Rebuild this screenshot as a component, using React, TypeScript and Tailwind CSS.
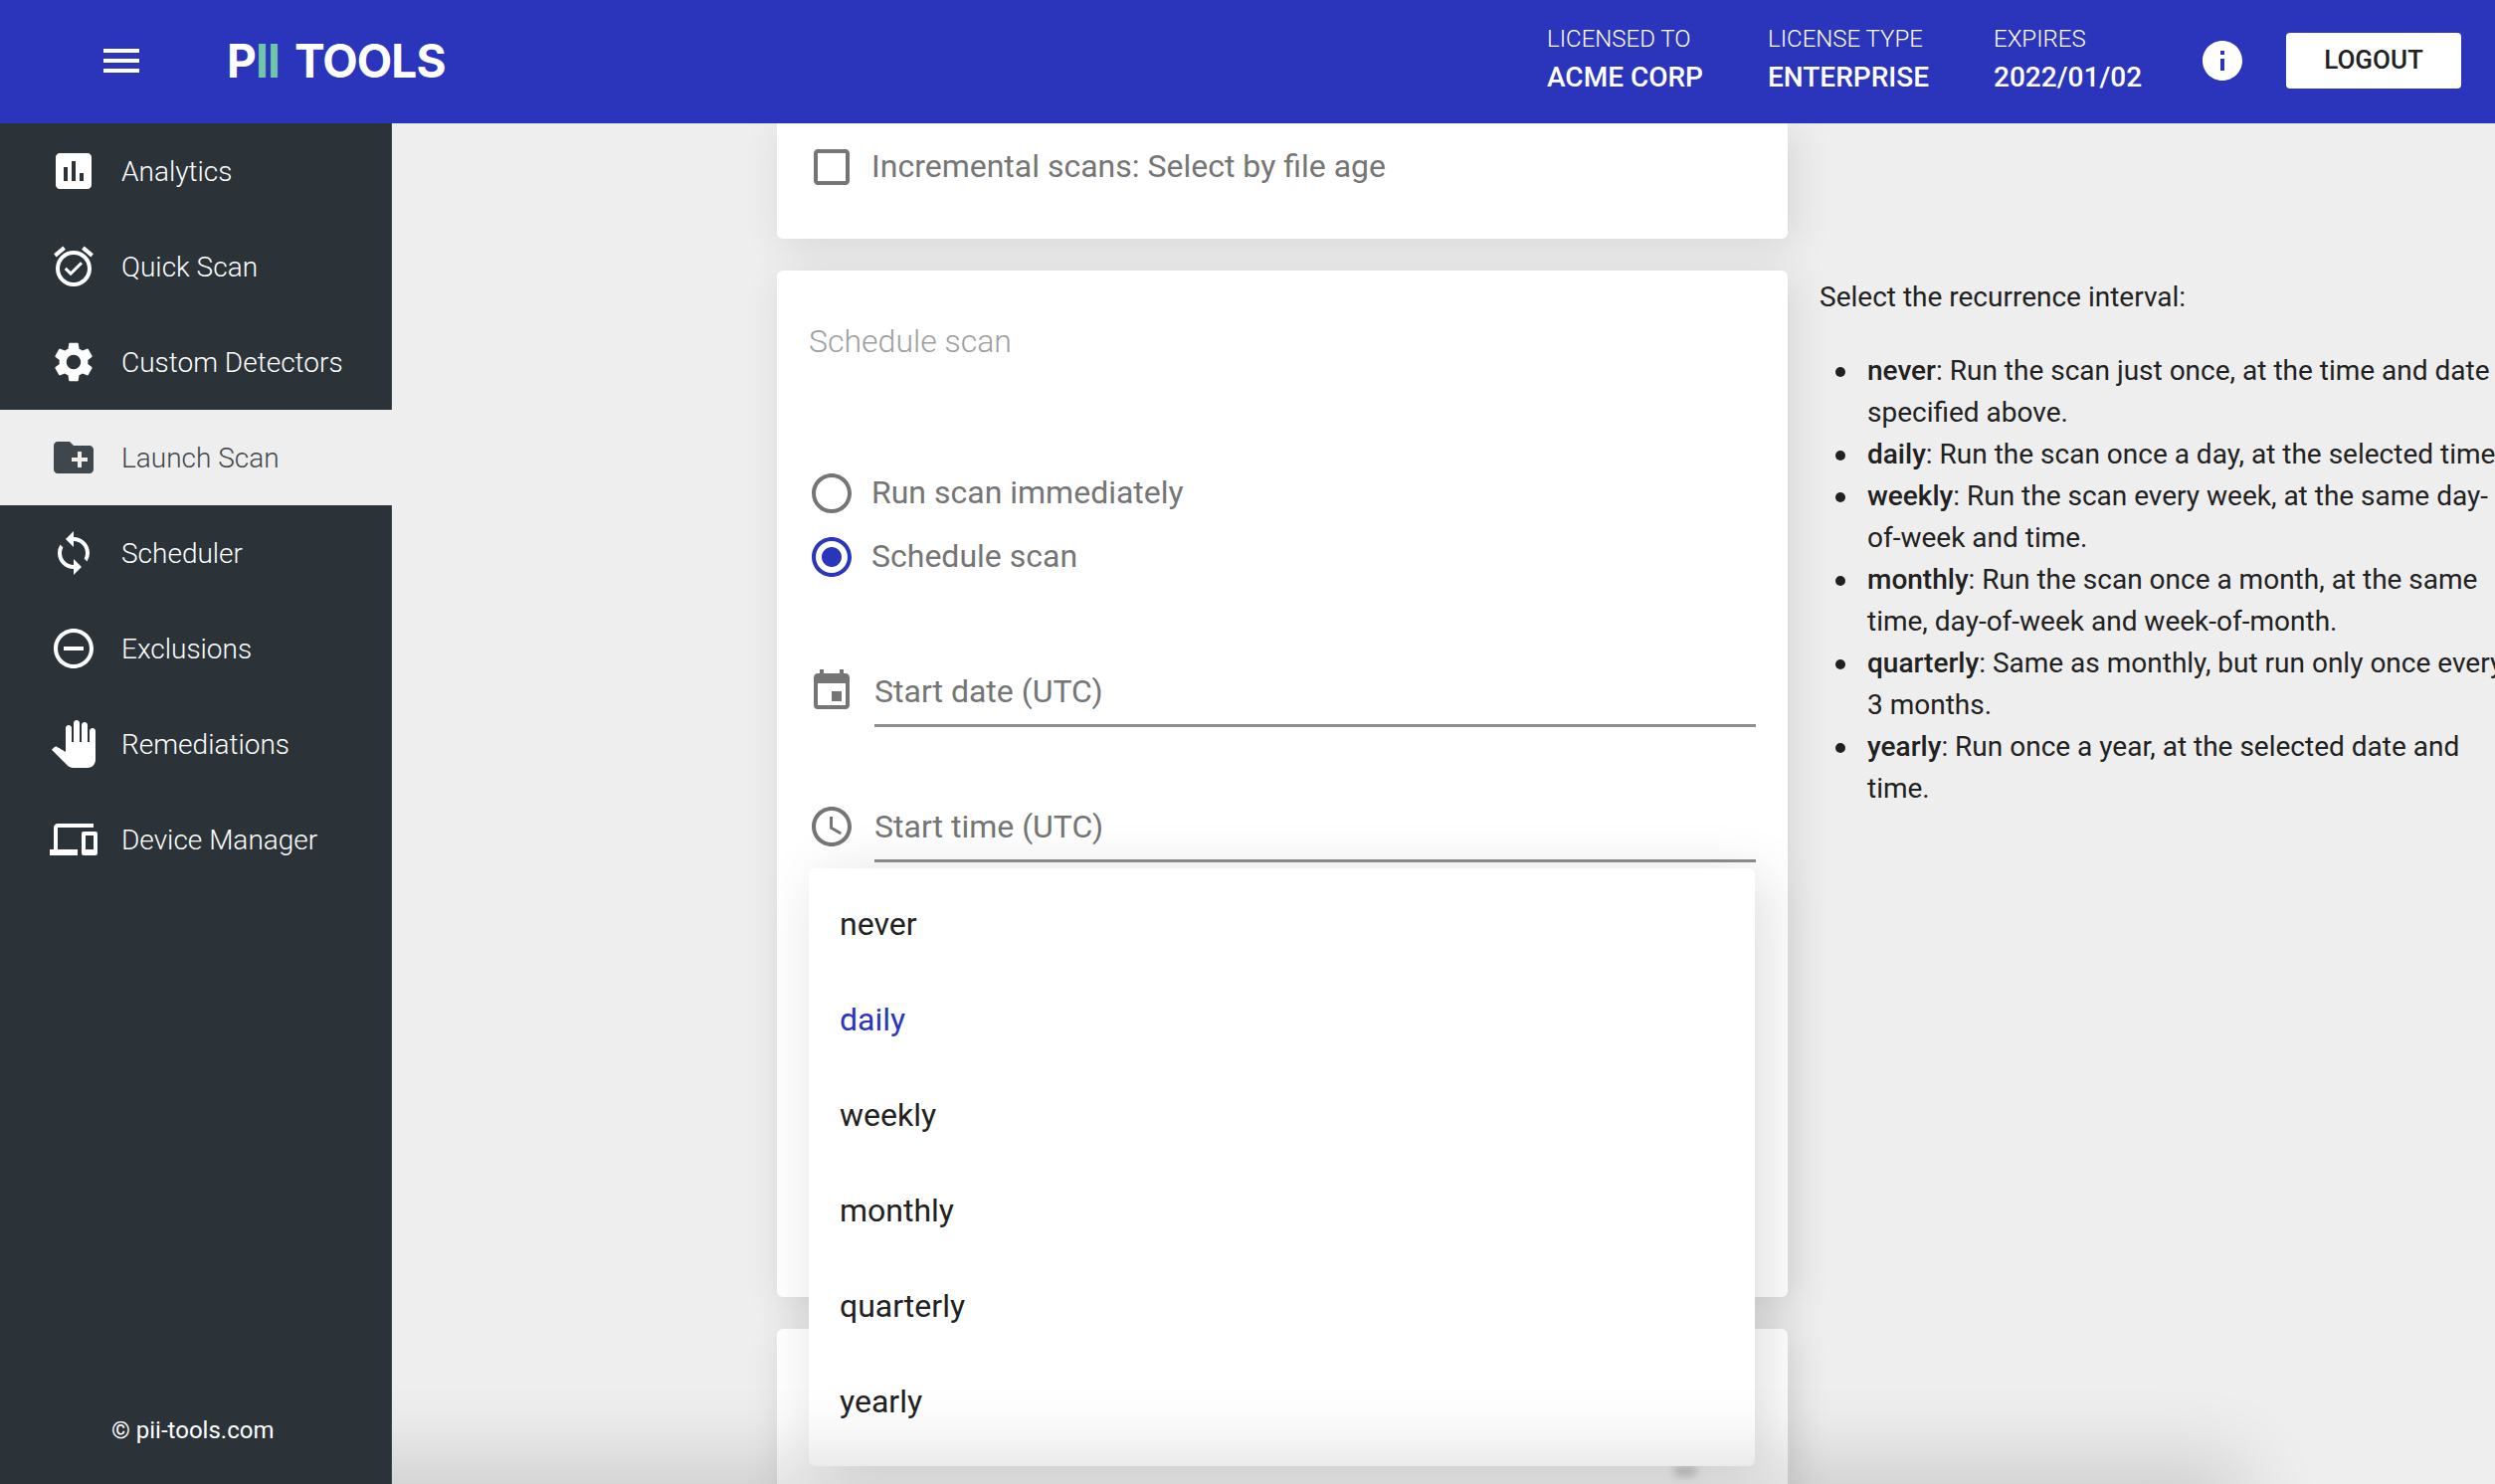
import {
  MdAssessment,
  MdOutlineAlarmOn,
  MdSettings,
  MdCreateNewFolder,
  MdSync,
  MdRemoveCircleOutline,
  MdPanTool,
  MdDevices,
  MdMenu,
  MdInfo,
  MdEvent,
  MdAccessTime,
  MdCheckBoxOutlineBlank,
  MdRadioButtonUnchecked,
  MdRadioButtonChecked,
} from "react-icons/md";

const navItems = [
  { label: "Analytics", icon: MdAssessment },
  { label: "Quick Scan", icon: MdOutlineAlarmOn },
  { label: "Custom Detectors", icon: MdSettings },
  { label: "Launch Scan", icon: MdCreateNewFolder, active: true },
  { label: "Scheduler", icon: MdSync },
  { label: "Exclusions", icon: MdRemoveCircleOutline },
  { label: "Remediations", icon: MdPanTool },
  { label: "Device Manager", icon: MdDevices },
];

const licenseInfo = [
  { label: "LICENSED TO", value: "ACME CORP", width: "w-[222px]" },
  { label: "LICENSE TYPE", value: "ENTERPRISE", width: "w-[227px]" },
  { label: "EXPIRES", value: "2022/01/02", width: "w-[229px]" },
];

const intervals = ["never", "daily", "weekly", "monthly", "quarterly", "yearly"];

const helpItems = [
  { name: "never", text: ": Run the scan just once, at the time and date specified above." },
  { name: "daily", text: ": Run the scan once a day, at the selected time." },
  { name: "weekly", text: ": Run the scan every week, at the same day-of-week and time." },
  { name: "monthly", text: ": Run the scan once a month, at the same time, day-of-week and week-of-month." },
  { name: "quarterly", text: ": Same as monthly, but run only once every 3 months." },
  { name: "yearly", text: ": Run once a year, at the selected date and time." },
];

function TopBar() {
  return (
    <header className="h-[124px] shrink-0 flex items-center pb-[3px] bg-[#2b35bb] text-white relative z-20">
      <MdMenu size={48} className="ml-[98px]" />
      <div className="ml-[82px] text-[46px] leading-none font-bold tracking-[-0.9px] font-['Inter',sans-serif]">
        P<span className="text-[#6fc7aa] mr-[5px]">II</span> TOOLS
      </div>

      <div className="ml-auto flex items-center">
        {licenseInfo.map((item) => (
          <div key={item.label} className={item.width}>
            <div className="text-[24px] leading-[32px] font-light">{item.label}</div>
            <div className="text-[28px] leading-[40px] mt-[3px] font-medium">{item.value}</div>
          </div>
        ))}
        <MdInfo size={48} className="ml-[-23px]" />
        <button className="ml-[40px] mr-[34px] w-[176px] h-[56px] bg-white rounded-[4px] text-[#212121] text-[26px] font-medium">
          LOGOUT
        </button>
      </div>
    </header>
  );
}

function SideNav() {
  return (
    <aside className="w-[394px] shrink-0 flex flex-col bg-[#2b3339] border-r border-[#3b454c] relative z-10">
      {navItems.map((item) => {
        const Icon = item.icon;
        return (
          <div
            key={item.label}
            className={`h-[96px] -mr-px flex items-center pl-[50px] text-[28px] font-light ${
              item.active ? "bg-[#eeeeee] text-[#3f474c]" : "text-white"
            }`}
          >
            <Icon size={48} />
            <span className="ml-[24px] pt-[2px]">{item.label}</span>
          </div>
        );
      })}
      <div className="mt-auto pb-[40px] pl-[112px] text-[24px] leading-[28px] text-white">© pii-tools.com</div>
    </aside>
  );
}

function DateRow({ label, icon: Icon, className }: { label: string; icon: typeof MdEvent; className: string }) {
  return (
    <div className={`flex items-end ${className}`}>
      <Icon size={48} className="mb-[12px] ml-[-1px] shrink-0 text-[#757575]" />
      <div className="ml-[19px] flex-1 h-[72px] flex items-center pt-[2px] border-b-[3px] border-[#8f8f8f] text-[32px] text-[#757575]">
        {label}
      </div>
    </div>
  );
}

export default function App() {
  return (
    <div className="w-[2508px] h-[1492px] flex flex-col overflow-hidden bg-[#eeeeee] font-['Roboto',sans-serif]">
      <TopBar />
      <div className="flex-1 flex min-h-0">
        <SideNav />
        <main className="flex-1 min-w-0 relative overflow-hidden flex pl-[387px]">
          <div className="w-[1016px] shrink-0 flex flex-col gap-[32px]">
            <section className="h-[116px] shrink-0 flex items-center pl-[32px] pb-[28px] bg-white rounded-b-[6px] shadow-[6px_6px_40px_rgba(0,0,0,0.1)]">
              <MdCheckBoxOutlineBlank size={48} className="text-[#757575] ml-[-1px]" />
              <span className="ml-[16px] pb-[2px] text-[32px] text-[#757575]">Incremental scans: Select by file age</span>
            </section>

            <section className="h-[1032px] shrink-0 px-[32px] bg-white rounded-[6px] shadow-[6px_6px_40px_rgba(0,0,0,0.1)]">
              <h2 className="pt-[50px] text-[32px] leading-[42px] font-light text-[#9e9e9e]">Schedule scan</h2>
              <div className="mt-[100px] flex items-center h-[64px]">
                <MdRadioButtonUnchecked size={48} className="ml-[-1px] text-[#757575]" />
                <span className="ml-[16px] pb-[2px] text-[32px] text-[#757575]">Run scan immediately</span>
              </div>
              <div className="flex items-center h-[64px]">
                <MdRadioButtonChecked size={48} className="ml-[-1px] text-[#2b35bb]" />
                <span className="ml-[16px] pb-[2px] text-[32px] text-[#757575]">Schedule scan</span>
              </div>
              <DateRow label="Start date (UTC)" icon={MdEvent} className="mt-[67px]" />
              <DateRow label="Start time (UTC)" icon={MdAccessTime} className="mt-[64px]" />
            </section>

            <section className="h-[200px] shrink-0 bg-white rounded-t-[6px] shadow-[6px_6px_40px_rgba(0,0,0,0.1)]" />
          </div>

          <aside className="w-[690px] shrink-0 ml-[32px] pt-[154px] text-[28px] leading-[42px] text-[#212121]">
            <p>Select the recurrence interval:</p>
            <ul className="mt-[32px] pl-[16px]">
              {helpItems.map((item) => (
                <li key={item.name} className="flex">
                  <span className="w-[10px] h-[10px] mt-[17px] mr-[22px] shrink-0 rounded-full bg-[#212121]" />
                  <span className="min-w-0">
                    <b className="font-medium">{item.name}</b>
                    {item.text}
                  </span>
                </li>
              ))}
            </ul>
          </aside>

          {/* Open select menu */}
          <div className="absolute left-[419px] top-[749px] w-[951px] h-[601px] pt-[8px] bg-white rounded-[6px] shadow-[10px_10px_60px_rgba(0,0,0,0.14)] z-10">
            {intervals.map((name) => (
              <div
                key={name}
                className={`h-[96px] flex items-center pl-[31px] text-[32px] ${
                  name === "daily" ? "text-[#2b35bb]" : "text-[#212121]"
                }`}
              >
                {name}
              </div>
            ))}
          </div>

          {/* Small smudge of shadow under the menu */}
          <div className="absolute left-[1289px] top-[1350px] w-[22px] h-[10px] bg-black/20 blur-[4px] z-[5]" />

          {/* Shadow coming up from below the fold */}
          <div className="absolute left-[-200px] top-full w-[2040px] h-[40px] shadow-[0_0_80px_20px_rgba(0,0,0,0.16)] z-20" />
        </main>
      </div>
    </div>
  );
}
